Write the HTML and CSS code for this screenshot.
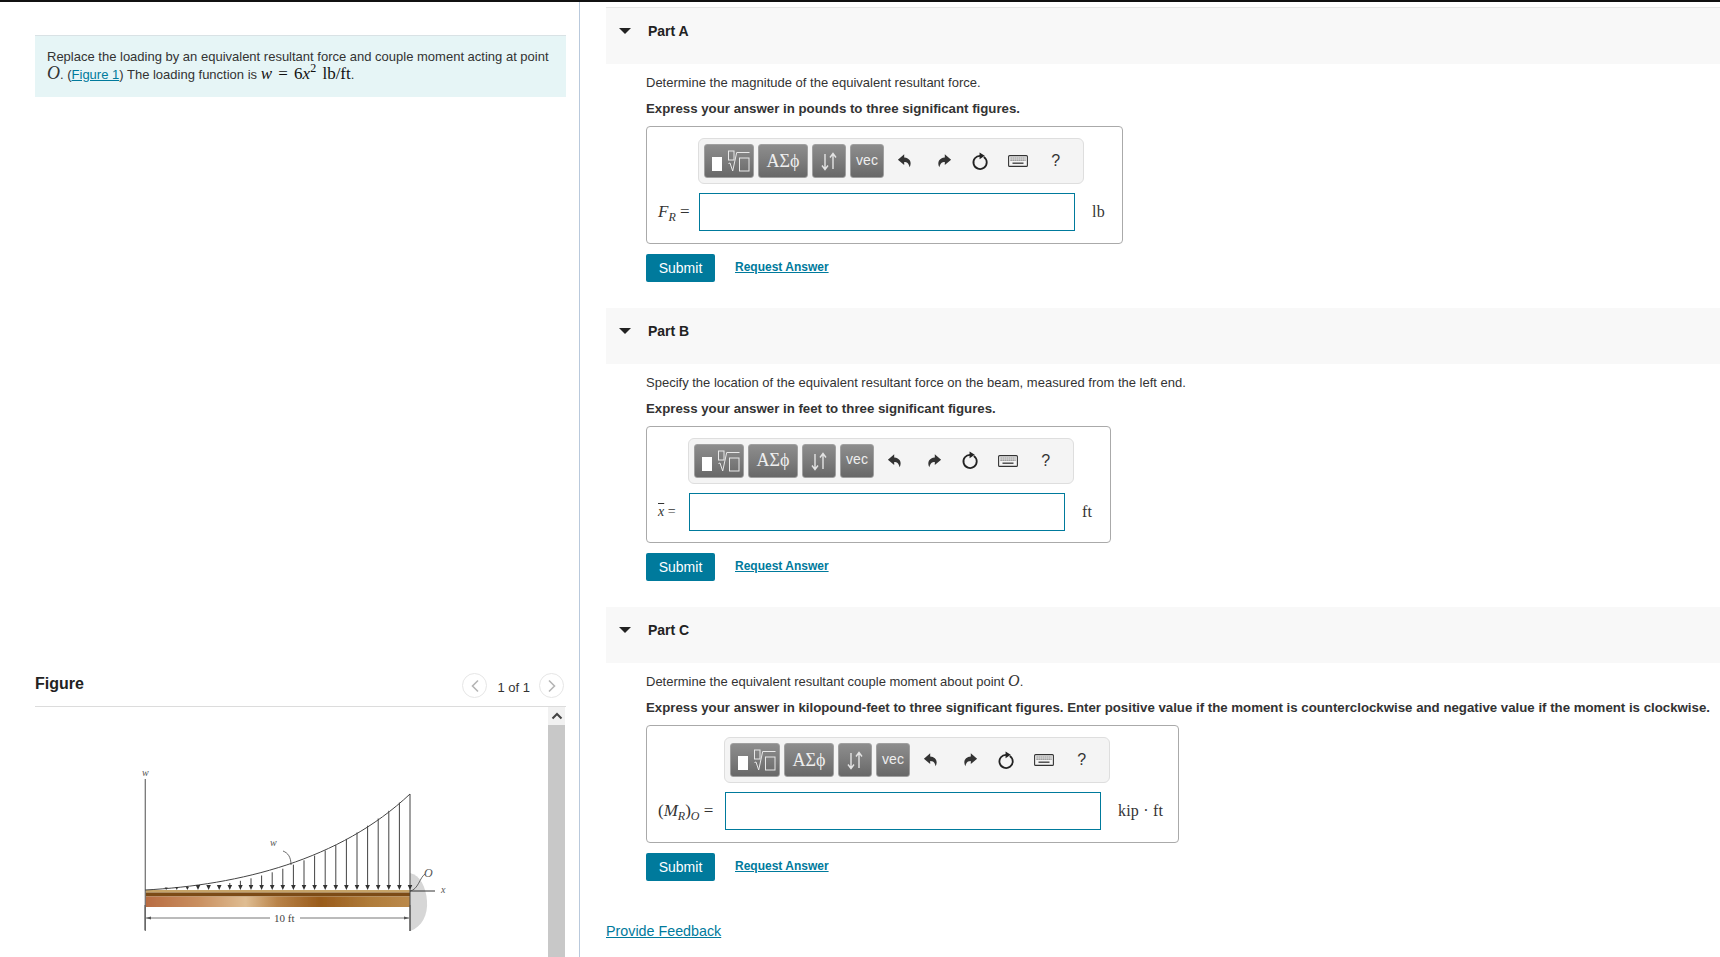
FILE: index.html
```html
<!DOCTYPE html>
<html lang="en">
<head>
<meta charset="utf-8">
<title>Part A</title>
<link rel="stylesheet" href="styles.css">
</head>
<body>
<svg class="defs" width="0" height="0" aria-hidden="true">
  <symbol id="i-tmpl" viewBox="0 0 50 34">
    <rect x="8" y="13" width="10" height="14" fill="#fff"/>
    <rect x="24.500" y="7" width="5.500" height="9" fill="none" stroke="#e8e8e8"/>
    <path d="M24.500 19.500l1.500-.5 2.700 8 4-18.500H45.500" fill="none" stroke="#e8e8e8" stroke-width="1"/>
    <rect x="35.500" y="14" width="9.500" height="13" fill="none" stroke="#e8e8e8"/>
  </symbol>
  <symbol id="i-sort" viewBox="0 0 34 34">
    <path d="M13 10v15M10 21.500l3 4 3-4M21 25V10M18 13.500l3-4 3 4" fill="none" stroke="#e4e4e4" stroke-width="1.400"/>
  </symbol>
  <symbol id="i-undo" viewBox="0 0 20 20">
    <path d="M8 2.500L1 8.500l7 6V11c3 0 5 1 6 6 3-6 0-10.500-6-11z" fill="#333"/>
  </symbol>
  <symbol id="i-redo" viewBox="0 0 20 20">
    <path d="M12 2.500l7 6-7 6V11c-3 0-5 1-6 6-3-6 0-10.500 6-11z" fill="#333"/>
  </symbol>
  <symbol id="i-reset" viewBox="0 0 20 20">
    <path d="M13.500 5.200A7 7 0 1 1 10 4" fill="none" stroke="#222" stroke-width="1.900"/>
    <path d="M9 .5l5.500 3.500L9 7.500z" fill="#222"/>
  </symbol>
  <symbol id="i-keys" viewBox="0 0 20 12">
    <rect x=".6" y=".6" width="18.800" height="10.800" rx="1" fill="#f4f4f4" stroke="#333" stroke-width="1.100"/>
    <path d="M2.500 3h15M2.500 5.200h15" stroke="#555" stroke-width="1.200" stroke-dasharray="1.200 .8"/>
    <path d="M4.500 8.200h11" stroke="#444" stroke-width="1.400"/>
  </symbol>
</svg>

<div class="page">
  <aside class="left">
    <div class="intro">
      Replace the loading by an equivalent resultant force and couple moment acting at point<br>
      <span class="m-it big">O</span>. (<a href="#fig">Figure 1</a>) The loading function is <span class="m-eq"><i>w</i> = 6<i>x</i><sup>2</sup> lb/ft</span>.
    </div>

    <div class="fig-head" id="fig">
      <h2>Figure</h2>
      <div class="pager">
        <button class="circle" aria-label="Previous"><svg width="10" height="14" viewBox="0 0 10 14"><path d="M8 1.500L2.500 7 8 12.500" fill="none" stroke="#b5b5b5" stroke-width="1.600"/></svg></button>
        <span class="pager-text">1 of 1</span>
        <button class="circle" aria-label="Next"><svg width="10" height="14" viewBox="0 0 10 14"><path d="M2 1.500L7.500 7 2 12.500" fill="none" stroke="#b5b5b5" stroke-width="1.600"/></svg></button>
      </div>
    </div>

    <div class="fig-body">
      <svg class="diagram" viewBox="35 707 514 250" width="514" height="250">
        <defs>
          <linearGradient id="wood" x1="0" x2="1" y1="0" y2="0">
            <stop offset="0" stop-color="#b86c42"/>
            <stop offset=".2" stop-color="#c98f5f"/>
            <stop offset=".38" stop-color="#dfbd92"/>
            <stop offset=".5" stop-color="#b98348"/>
            <stop offset=".66" stop-color="#995b1b"/>
            <stop offset=".85" stop-color="#b07c3a"/>
            <stop offset="1" stop-color="#bb8a4c"/>
          </linearGradient>
          <filter id="soft"><feGaussianBlur stdDeviation=".3"/></filter>
        </defs>
        <g filter="url(#soft)">
          <path d="M410 873c10 2 16 14 17 28s-5 26-17 30z" fill="#d6d6d6"/>
          <rect x="145" y="890" width="265" height="2.500" fill="#c7a468"/>
          <rect x="145" y="892.500" width="265" height="4" fill="#7b4c14"/>
          <rect x="145" y="896.500" width="265" height="10.500" fill="url(#wood)"/>
          <path d="M145.300 779V931" stroke="#777" stroke-width="1.300"/>
          <path d="M145 890C240 885 340 860 410 794V931" fill="none" stroke="#444" stroke-width="1"/>
          <path d="M410 891H435" stroke="#333" stroke-width="1"/>
          <path d="M187.400 888.600V886M198 887.600V886M229.800 883V886M240.400 880.800V886M251 878.300V886M261.600 875.500V886M272.200 872.300V886M282.800 868.700V886M293.400 864.700V886M304 860.300V886M314.600 855.600V886M325.200 850.500V886M335.800 844.900V886M346.400 838.900V886M357 832.500V886M367.600 825.700V886M378.200 818.500V886M388.800 810.800V886M399.400 802.600V886" stroke="#444" stroke-width="1"/>
          <path d="M164.700 887.500h3l-1.500 2.500zM175.300 887h3l-1.500 3zM185.900 887h3l-1.500 3zM195.700 885h4.600l-2.300 5zM206.300 885h4.600l-2.300 5zM216.900 885h4.600l-2.300 5zM227.500 885h4.600l-2.300 5zM238.100 885h4.600l-2.300 5zM248.700 885h4.600l-2.300 5zM259.300 885h4.600l-2.300 5zM269.900 885h4.600l-2.300 5zM280.500 885h4.600l-2.300 5zM291.100 885h4.600l-2.300 5zM301.700 885h4.600l-2.300 5zM312.300 885h4.600l-2.300 5zM322.900 885h4.600l-2.300 5zM333.500 885h4.600l-2.300 5zM344.100 885h4.600l-2.300 5zM354.700 885h4.600l-2.300 5zM365.300 885h4.600l-2.300 5zM375.900 885h4.600l-2.300 5zM386.500 885h4.600l-2.300 5zM397.100 885h4.600l-2.300 5zM407.700 885h4.600l-2.300 5z" fill="#333"/>
          <path d="M283 851c5 2 8 6 8 14M410 891c8-1 10-14 15-17" fill="none" stroke="#444" stroke-width=".8"/>
          <path d="M145 905V930M410 905V931" stroke="#555" stroke-width="1"/>
          <path d="M146 918H270M300 918H409" stroke="#777" stroke-width="1"/>
          <path d="M146 918l5-1.500v3zM409 918l-5-1.500v3z" fill="#555"/>
        </g>
        <text class="d-it" x="142" y="776">w</text>
        <text class="d-it" x="270" y="846">w</text>
        <text class="d-it big" x="424" y="877">O</text>
        <text class="d-it" x="441" y="893">x</text>
        <text class="d-num" x="274" y="922">10 ft</text>
      </svg>
      <div class="scroll">
        <div class="scroll-up"><svg width="12" height="8" viewBox="0 0 12 8"><path d="M1.500 6.500L6 2l4.500 4.500" fill="none" stroke="#444" stroke-width="2"/></svg></div>
        <div class="scroll-thumb"></div>
      </div>
    </div>
  </aside>

  <main class="right">
    <section class="part first">
      <div class="part-head"><span class="tri"></span><h3>Part A</h3></div>
      <div class="part-body">
        <p class="q">Determine the magnitude of the equivalent resultant force.</p>
        <p class="ins">Express your answer in pounds to three significant figures.</p>
        <div class="answer">
          <div class="toolbar">
            <div class="tb-math">
              <span class="tb wide"><svg width="50" height="34"><use href="#i-tmpl"/></svg></span>
              <span class="tb wide greek">ΑΣϕ</span>
              <span class="tb"><svg width="34" height="34"><use href="#i-sort"/></svg></span>
              <span class="tb vec">vec</span>
            </div>
            <div class="tb-tools">
              <span class="tool"><svg width="18" height="18"><use href="#i-undo"/></svg></span>
              <span class="tool"><svg width="18" height="18"><use href="#i-redo"/></svg></span>
              <span class="tool"><svg width="19" height="19"><use href="#i-reset"/></svg></span>
              <span class="tool"><svg width="20" height="12"><use href="#i-keys"/></svg></span>
              <span class="tool help">?</span>
            </div>
          </div>
          <label class="lbl lbl-a"><i>F<sub>R</sub></i> =</label>
          <input class="field" type="text" aria-label="answer">
          <span class="unit unit-a">lb</span>
        </div>
        <div class="actions"><button class="submit">Submit</button><a class="req" href="#a">Request Answer</a></div>
      </div>
    </section>

    <section class="part">
      <div class="part-head"><span class="tri"></span><h3>Part B</h3></div>
      <div class="part-body">
        <p class="q">Specify the location of the equivalent resultant force on the beam, measured from the left end.</p>
        <p class="ins">Express your answer in feet to three significant figures.</p>
        <div class="answer">
          <div class="toolbar">
            <div class="tb-math">
              <span class="tb wide"><svg width="50" height="34"><use href="#i-tmpl"/></svg></span>
              <span class="tb wide greek">ΑΣϕ</span>
              <span class="tb"><svg width="34" height="34"><use href="#i-sort"/></svg></span>
              <span class="tb vec">vec</span>
            </div>
            <div class="tb-tools">
              <span class="tool"><svg width="18" height="18"><use href="#i-undo"/></svg></span>
              <span class="tool"><svg width="18" height="18"><use href="#i-redo"/></svg></span>
              <span class="tool"><svg width="19" height="19"><use href="#i-reset"/></svg></span>
              <span class="tool"><svg width="20" height="12"><use href="#i-keys"/></svg></span>
              <span class="tool help">?</span>
            </div>
          </div>
          <label class="lbl lbl-b"><i class="over">x</i> =</label>
          <input class="field" type="text" aria-label="answer">
          <span class="unit unit-b">ft</span>
        </div>
        <div class="actions"><button class="submit">Submit</button><a class="req" href="#b">Request Answer</a></div>
      </div>
    </section>

    <section class="part">
      <div class="part-head"><span class="tri"></span><h3>Part C</h3></div>
      <div class="part-body">
        <p class="q">Determine the equivalent resultant couple moment about point <span class="m-it big">O</span>.</p>
        <p class="ins">Express your answer in kilopound-feet to three significant figures. Enter positive value if the moment is counterclockwise and negative value if the moment is clockwise.</p>
        <div class="answer">
          <div class="toolbar">
            <div class="tb-math">
              <span class="tb wide"><svg width="50" height="34"><use href="#i-tmpl"/></svg></span>
              <span class="tb wide greek">ΑΣϕ</span>
              <span class="tb"><svg width="34" height="34"><use href="#i-sort"/></svg></span>
              <span class="tb vec">vec</span>
            </div>
            <div class="tb-tools">
              <span class="tool"><svg width="18" height="18"><use href="#i-undo"/></svg></span>
              <span class="tool"><svg width="18" height="18"><use href="#i-redo"/></svg></span>
              <span class="tool"><svg width="19" height="19"><use href="#i-reset"/></svg></span>
              <span class="tool"><svg width="20" height="12"><use href="#i-keys"/></svg></span>
              <span class="tool help">?</span>
            </div>
          </div>
          <label class="lbl lbl-c">(<i>M<sub>R</sub></i>)<sub><i>O</i></sub> =</label>
          <input class="field" type="text" aria-label="answer">
          <span class="unit unit-c">kip · ft</span>
        </div>
        <div class="actions"><button class="submit">Submit</button><a class="req" href="#c">Request Answer</a></div>
      </div>
    </section>

    <a class="feedback" href="#f">Provide Feedback</a>
  </main>
</div>
</body>
</html>
```

FILE: styles.css
```css
* { box-sizing: border-box; }
html, body { margin: 0; height: 957px; overflow: hidden; background: #fff; }
body { font-family: "Liberation Sans", Arial, sans-serif; font-size: 12px; color: #333; }
.defs { position: absolute; }
a { color: #007a9c; }

.page { display: flex; height: 957px; border-top: 2px solid #111; }

.left { width: 580px; flex: none; border-right: 1px solid #b9c9dc; padding: 33px 13px 0 35px; display: flex; flex-direction: column; }
.intro { height: 62px; background: #e6f5f6; border-top: 1px solid #d9e2e5; padding: 12px 12px 0 12px; font-size: 13px; line-height: 17.500px; color: #333; white-space: nowrap; }
.m-it { font-family: "Liberation Serif", serif; font-style: italic; line-height: 0; }
.big { font-size: 16px; }
.intro .big { font-size: 18px; }
.m-eq { font-family: "Liberation Serif", serif; font-size: 17px; line-height: 0; color: #111; word-spacing: 2px; }
.m-eq sup { font-size: 12px; line-height: 0; }

.fig-head { margin-top: 572px; height: 38px; flex: none; border-bottom: 1px solid #dcdcdc; display: flex; align-items: flex-start; justify-content: space-between; padding-top: 4px; }
.fig-head h2 { margin: 0; font-size: 16px; line-height: 22px; font-weight: bold; color: #222; }
.pager { display: flex; align-items: center; gap: 9px; padding-right: 2px; }
.circle { width: 25px; height: 25px; border: 1px solid #e6e6e6; border-radius: 50%; background: #fff; padding: 0; display: flex; align-items: center; justify-content: center; }
.pager-text { font-size: 13px; color: #333; margin: 3px 0 0 1px; }

.fig-body { display: flex; flex: 1; min-height: 0; }
.diagram { display: block; flex: none; }
.d-it { font-family: "Liberation Serif", serif; font-style: italic; font-size: 10px; fill: #555; }
.d-it.big { font-size: 12px; }
.d-num { font-family: "Liberation Serif", serif; font-size: 11px; fill: #444; }
.scroll { width: 17px; flex: none; margin-left: -1px; display: flex; flex-direction: column; }
.scroll-up { height: 18px; background: #f1f1f1; display: flex; align-items: center; justify-content: center; }
.scroll-thumb { flex: 1; background: #c8c8c8; }

.right { flex: 1; min-width: 0; padding: 0 0 0 26px; overflow: hidden; }
.part { margin-bottom: 26px; }
.part.first { padding-top: 5px; }
.part.first .part-head { border-top: 1px solid #e6e6e6; height: 57px; }
.part-head { height: 56px; background: #f8f8f8; display: flex; align-items: center; padding: 0 0 10px 13px; }
.tri { width: 0; height: 0; border-left: 6px solid transparent; border-right: 6px solid transparent; border-top: 6px solid #222; margin-right: 17px; }
.part-head h3 { margin: 0; font-size: 14px; line-height: 20px; font-weight: bold; color: #222; }
.part-body { padding-left: 40px; }
.q { margin: 9px 0 0; font-size: 13px; line-height: 20px; white-space: nowrap; color: #333; }
.ins { margin: 6px 0 0; font-size: 13.250px; line-height: 20px; font-weight: bold; white-space: nowrap; color: #333; }

.answer { margin-top: 7px; width: fit-content; height: 117.500px; border: 1px solid #aaa; border-radius: 4px; padding: 11px 16px 0 11px; display: grid; grid-template-columns: auto 376px auto; grid-template-rows: 46px 38px; row-gap: 9px; align-items: center; }
.toolbar { grid-column: 2 / 4; grid-row: 1; width: 386px; height: 46px; margin-left: -1px; background: #f4f4f4; border: 1px solid #dedede; border-radius: 6px; padding: 5px; display: flex; }
.tb-math { display: flex; gap: 4px; }
.tb { width: 34px; height: 34px; border-radius: 3px; border: 1px solid #a0a0a0; background: linear-gradient(#8d8d8d, #7a7a7a 55%, #686868); color: #eee; display: flex; align-items: center; justify-content: center; }
.tb svg { display: block; flex: none; margin: -1px; }
.tb.wide { width: 50px; }
.greek { font-family: "Liberation Serif", serif; font-size: 18px; }
.vec { font-size: 14px; padding-bottom: 3px; }
.tb-tools { display: flex; margin-left: 3px; }
.tool { width: 37.500px; height: 34px; display: flex; align-items: center; justify-content: center; color: #333; }
.help { font-size: 16px; }

.lbl { grid-column: 1; grid-row: 2; font-family: "Liberation Serif", serif; font-size: 17px; color: #333; white-space: nowrap; }
.lbl i { font-style: italic; }
.lbl sub { font-size: 12px; line-height: 0; }
.lbl-a { width: 41px; }
.lbl-b { width: 31px; font-size: 14px; }
.lbl-c { width: 67px; }
.over { text-decoration: overline; }
.field { grid-column: 2; grid-row: 2; width: 376px; height: 38px; border: 1px solid #007a9c; background: #fff; padding: 0; margin: 0; outline: none; }
.unit { grid-column: 3; grid-row: 2; padding-left: 17px; font-family: "Liberation Serif", serif; font-size: 16px; letter-spacing: .2px; color: #333; white-space: nowrap; }
.unit-a { width: 31px; }
.unit-b { width: 29px; }
.unit-c { width: 61px; }

.actions { margin-top: 10px; display: flex; align-items: center; }
.submit { width: 69px; height: 28px; background: #007a9c; color: #fff; border: 0; border-radius: 2px; font-family: "Liberation Sans", Arial, sans-serif; font-size: 14px; padding: 0; }
.req { margin-left: 20px; font-size: 12px; font-weight: bold; padding-bottom: 2px; }

.feedback { display: block; margin-top: 40px; font-size: 14.300px; line-height: 20px; }
```
